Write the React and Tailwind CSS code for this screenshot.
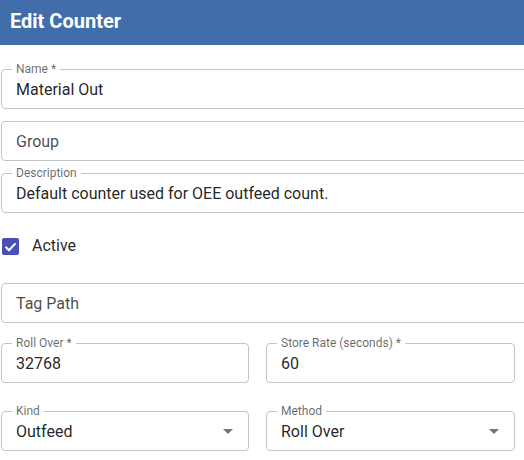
import React from "react";

const Field = ({ label, value, placeholder, select, className = "" }) => {
  return (
    <div
      className={`relative flex h-10 items-center rounded border border-[#c4c4c4] pl-[14px] pr-[14px] pt-[1px] ${className}`}
    >
      {label && (
        <span className="absolute left-[10px] top-[-9px] bg-white px-1 text-[12px] leading-4 text-[rgba(0,0,0,0.6)]">
          {label}
        </span>
      )}
      {value ? (
        <span className="flex-1 text-[16px] leading-6 text-[rgba(0,0,0,0.87)]">{value}</span>
      ) : (
        <span className="flex-1 text-[16px] leading-6 text-[rgba(0,0,0,0.72)]">{placeholder}</span>
      )}
      {select && (
        <svg width="10" height="5" viewBox="0 0 10 5" className="mr-[1px] shrink-0">
          <path d="M0 0 L10 0 L5 5 Z" fill="rgba(0,0,0,0.54)" />
        </svg>
      )}
    </div>
  );
};

const App = () => {
  return (
    <div
      className="h-[460px] w-[524px] overflow-hidden bg-white"
      style={{ fontFamily: "Roboto, 'Liberation Sans', sans-serif" }}
    >
      {/* title bar */}
      <div className="h-[45px] bg-[#416dab] pl-[10px] pt-[5px]">
        <div className="text-[20px] font-bold leading-8 text-white">Edit Counter</div>
      </div>

      <div className="flex flex-col pl-px pt-6">
        <Field label="Name *" value="Material Out" className="mb-3 w-[560px]" />
        <Field placeholder="Group" className="mb-3 w-[560px]" />
        <Field
          label="Description"
          value="Default counter used for OEE outfeed count."
          className="mb-6 w-[560px]"
        />

        <div className="mb-[28px] flex h-[18px] items-center">
          <div className="ml-px flex h-[17px] w-[17px] items-center justify-center rounded-[2px] bg-[#4a4fb5]">
            <svg width="15" height="15" viewBox="0 0 24 24">
              <path
                d="M4 12.5 L9.5 18 L20 7"
                fill="none"
                stroke="white"
                strokeWidth="3.2"
              />
            </svg>
          </div>
          <span className="ml-[13px] text-[16px] leading-6 text-[rgba(0,0,0,0.87)]">Active</span>
        </div>

        <Field placeholder="Tag Path" className="mb-5 w-[560px]" />

        <div className="mb-[28px] grid grid-cols-[248px_249px] gap-x-[17px]">
          <Field label="Roll Over *" value="32768" />
          <Field label="Store Rate (seconds) *" value="60" />
        </div>

        <div className="grid grid-cols-[248px_249px] gap-x-[17px]">
          <Field label="Kind" value="Outfeed" select />
          <Field label="Method" value="Roll Over" select />
        </div>
      </div>
    </div>
  );
};

export default App;
